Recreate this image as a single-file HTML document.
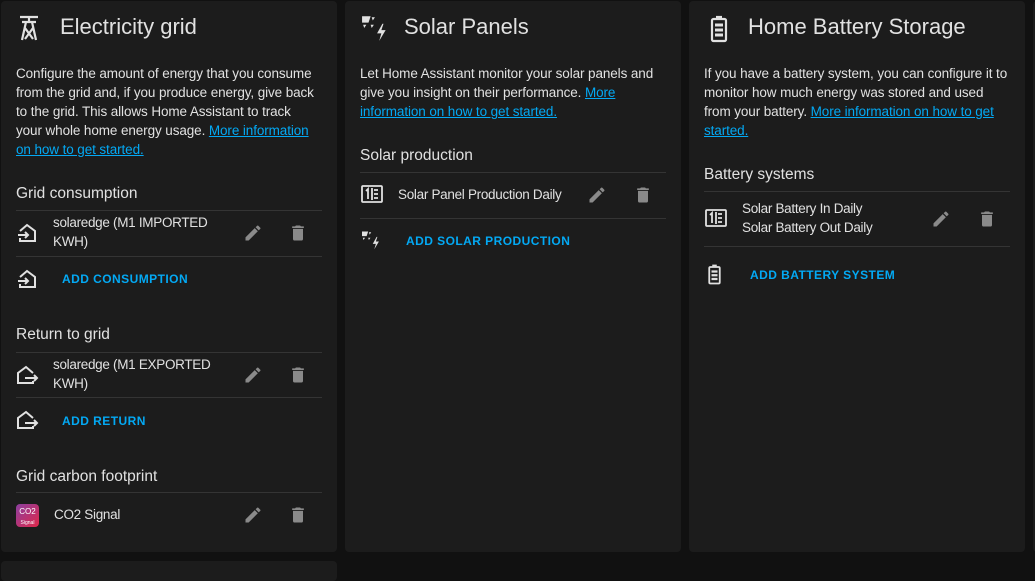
<!DOCTYPE html>
<html><head><meta charset="utf-8"><style>
*{margin:0;padding:0;box-sizing:border-box}
body{width:1035px;height:567px;background:#111111;overflow:hidden;font-family:"Liberation Sans",sans-serif;color:#e1e1e1;position:relative}
.card{position:absolute;background:#1c1c1c;border-radius:4px}
.a{position:absolute;white-space:nowrap}
.t{font-size:22px;color:#e1e1e1}
.p{font-size:13.5px;line-height:19px;color:#e1e1e1;letter-spacing:-0.1px}
.p a{color:#03a9f4;text-decoration:underline}
.h{font-size:15.5px;color:#e1e1e1}
.i{font-size:13.5px;line-height:19px;letter-spacing:-0.3px}
.b{font-size:12px;font-weight:bold;letter-spacing:0.45px;color:#03a9f4}
.d{position:absolute;height:1px;background:#343434}
svg{position:absolute}
</style></head><body>
<div class="card" style="left:1px;top:1px;width:336px;height:551px"></div>
<div class="card" style="left:345px;top:1px;width:336px;height:551px"></div>
<div class="card" style="left:689px;top:1px;width:336px;height:551px"></div>
<div class="card" style="left:1px;top:561px;width:336px;height:20px"></div>
<div class="card" style="left:1033px;top:1px;width:20px;height:551px"></div>

<!-- Card 1 -->
<svg style="left:17px;top:14px" width="24" height="28" viewBox="0 0 24 28" fill="none" stroke="#e1e1e1" stroke-width="2.2"><path d="M3 3H21M5 8H19M12 3V8M9 8L5 26M15 8L19 26M8 14L16 25M16 14L8 25"/></svg>
<div class="a t" style="left:60px;top:14px">Electricity grid</div>
<div class="a p" style="left:16px;top:64px">Configure the amount of energy that you consume<br>from the grid and, if you produce energy, give back<br>to the grid. This allows Home Assistant to track<br>your whole home energy usage. <a>More information<br>on how to get started.</a></div>
<div class="a h" style="left:16px;top:185px">Grid consumption</div>
<div class="d" style="left:16px;top:210px;width:306px"></div>
<svg style="left:16px;top:222px" width="22" height="22" viewBox="0 0 22 22" fill="none" stroke="#e1e1e1" stroke-width="2"><path d="M4 9L11 3L19 9V19H4V16M2 13H12M9 10L12 13L9 16"/></svg>
<div class="a i" style="left:53px;top:213px">solaredge (M1 IMPORTED<br>KWH)</div>
<svg style="left:243px;top:223px" width="20" height="20" viewBox="0 0 24 24" fill="#8a8a8a"><path d="M3 17.25V21h3.75L17.81 9.94l-3.75-3.75L3 17.25zM20.71 7.04a1 1 0 000-1.41l-2.34-2.34a1 1 0 00-1.41 0l-1.83 1.83 3.75 3.75 1.83-1.830z"/></svg>
<svg style="left:288px;top:223px" width="20" height="20" viewBox="0 0 24 24" fill="#8a8a8a"><path d="M6 19a2 2 0 002 2h8a2 2 0 002-2V7H6v12zM19 4h-3.5l-1-1h-5l-1 1H5v2h14V4z"/></svg>
<div class="d" style="left:16px;top:256px;width:306px"></div>
<svg style="left:16px;top:268px" width="22" height="22" viewBox="0 0 22 22" fill="none" stroke="#e1e1e1" stroke-width="2"><path d="M4 9L11 3L19 9V19H4V16M2 13H12M9 10L12 13L9 16"/></svg>
<div class="a b" style="left:62px;top:272px">ADD CONSUMPTION</div>

<div class="a h" style="left:16px;top:326px">Return to grid</div>
<div class="d" style="left:16px;top:352px;width:306px"></div>
<svg style="left:16px;top:364px" width="24" height="22" viewBox="0 0 24 22" fill="none" stroke="#e1e1e1" stroke-width="2"><path d="M17 9L10 3L2 9V19H17V17M9 14H21M18 11L21 14L18 17"/></svg>
<div class="a i" style="left:53px;top:355px">solaredge (M1 EXPORTED<br>KWH)</div>
<svg style="left:243px;top:365px" width="20" height="20" viewBox="0 0 24 24" fill="#8a8a8a"><path d="M3 17.25V21h3.75L17.81 9.94l-3.75-3.75L3 17.25zM20.71 7.04a1 1 0 000-1.41l-2.34-2.34a1 1 0 00-1.41 0l-1.83 1.83 3.75 3.75 1.83-1.83z"/></svg>
<svg style="left:288px;top:365px" width="20" height="20" viewBox="0 0 24 24" fill="#8a8a8a"><path d="M6 19a2 2 0 002 2h8a2 2 0 002-2V7H6v12zM19 4h-3.5l-1-1h-5l-1 1H5v2h14V4z"/></svg>
<div class="d" style="left:16px;top:397px;width:306px"></div>
<svg style="left:16px;top:409px" width="24" height="22" viewBox="0 0 24 22" fill="none" stroke="#e1e1e1" stroke-width="2"><path d="M17 9L10 3L2 9V19H17V17M9 14H21M18 11L21 14L18 17"/></svg>
<div class="a b" style="left:62px;top:414px">ADD RETURN</div>

<div class="a h" style="left:16px;top:468px">Grid carbon footprint</div>
<div class="d" style="left:16px;top:492px;width:306px"></div>
<div class="a" style="left:16px;top:504px;width:23px;height:23px;border-radius:4px;background:linear-gradient(135deg,#8b3fa0,#e0284a);color:#fff;font-size:8px;text-align:center;line-height:10px;padding-top:3px">CO2<br><span style="font-size:5px">Signal</span></div>
<div class="a i" style="left:54px;top:505px">CO2 Signal</div>
<svg style="left:243px;top:505px" width="20" height="20" viewBox="0 0 24 24" fill="#8a8a8a"><path d="M3 17.25V21h3.75L17.81 9.94l-3.75-3.75L3 17.25zM20.71 7.04a1 1 0 000-1.41l-2.34-2.34a1 1 0 00-1.41 0l-1.83 1.83 3.75 3.75 1.83-1.83z"/></svg>
<svg style="left:288px;top:505px" width="20" height="20" viewBox="0 0 24 24" fill="#8a8a8a"><path d="M6 19a2 2 0 002 2h8a2 2 0 002-2V7H6v12zM19 4h-3.5l-1-1h-5l-1 1H5v2h14V4z"/></svg>

<!-- Card 2 -->
<svg style="left:361px;top:14px" width="30" height="28" viewBox="0 0 28 26" fill="#e1e1e1"><path d="M1 2H9L7 8H1Z"/><path d="M10 3L13 3L11 6Z"/><path d="M2 10L5 10L3 13Z"/><path d="M9 10L12 10L10 13Z"/><path d="M20 9L15 18H19L17 25L23 15H19L21 9Z"/></svg>
<div class="a t" style="left:404px;top:14px">Solar Panels</div>
<div class="a p" style="left:360px;top:64px">Let Home Assistant monitor your solar panels and<br>give you insight on their performance. <a>More<br>information on how to get started.</a></div>
<div class="a h" style="left:360px;top:147px">Solar production</div>
<div class="d" style="left:360px;top:172px;width:306px"></div>
<svg style="left:361px;top:185px" width="22" height="18" viewBox="0 0 22 18" fill="none" stroke="#e1e1e1" stroke-width="1.8"><rect x="1" y="1" width="20" height="16" rx="1"/><path d="M5 6L7 4V14M11 3V15M13 5H17M13 9H17M13 13H17"/></svg>
<div class="a i" style="left:398px;top:185px">Solar Panel Production Daily</div>
<svg style="left:587px;top:185px" width="20" height="20" viewBox="0 0 24 24" fill="#8a8a8a"><path d="M3 17.25V21h3.75L17.81 9.94l-3.75-3.75L3 17.25zM20.71 7.04a1 1 0 000-1.41l-2.34-2.34a1 1 0 00-1.41 0l-1.83 1.83 3.75 3.75 1.83-1.83z"/></svg>
<svg style="left:633px;top:185px" width="20" height="20" viewBox="0 0 24 24" fill="#8a8a8a"><path d="M6 19a2 2 0 002 2h8a2 2 0 002-2V7H6v12zM19 4h-3.5l-1-1h-5l-1 1H5v2h14V4z"/></svg>
<div class="d" style="left:360px;top:218px;width:306px"></div>
<svg style="left:361px;top:230px" width="22" height="20" viewBox="0 0 28 26" fill="#e1e1e1"><path d="M1 2H9L7 8H1Z"/><path d="M10 3L13 3L11 6Z"/><path d="M2 10L5 10L3 13Z"/><path d="M9 10L12 10L10 13Z"/><path d="M20 9L15 18H19L17 25L23 15H19L21 9Z"/></svg>
<div class="a b" style="left:406px;top:234px">ADD SOLAR PRODUCTION</div>

<!-- Card 3 -->
<svg style="left:709px;top:15px" width="20" height="28" viewBox="0 0 20 28" fill="none" stroke="#e1e1e1" stroke-width="2.2"><path d="M7 2H13"/><rect x="3" y="4" width="14" height="22" rx="1.5"/><path d="M6 10H14M6 15H14M6 20H14" stroke-width="3"/></svg>
<div class="a t" style="left:748px;top:14px">Home Battery Storage</div>
<div class="a p" style="left:704px;top:64px">If you have a battery system, you can configure it to<br>monitor how much energy was stored and used<br>from your battery. <a>More information on how to get<br>started.</a></div>
<div class="a h" style="left:704px;top:166px">Battery systems</div>
<div class="d" style="left:704px;top:191px;width:306px"></div>
<svg style="left:705px;top:209px" width="22" height="18" viewBox="0 0 22 18" fill="none" stroke="#e1e1e1" stroke-width="1.8"><rect x="1" y="1" width="20" height="16" rx="1"/><path d="M5 6L7 4V14M11 3V15M13 5H17M13 9H17M13 13H17"/></svg>
<div class="a i" style="left:742px;top:199px">Solar Battery In Daily<br>Solar Battery Out Daily</div>
<svg style="left:931px;top:209px" width="20" height="20" viewBox="0 0 24 24" fill="#8a8a8a"><path d="M3 17.25V21h3.75L17.81 9.94l-3.75-3.75L3 17.25zM20.71 7.04a1 1 0 000-1.41l-2.34-2.34a1 1 0 00-1.41 0l-1.83 1.83 3.75 3.75 1.83-1.83z"/></svg>
<svg style="left:977px;top:209px" width="20" height="20" viewBox="0 0 24 24" fill="#8a8a8a"><path d="M6 19a2 2 0 002 2h8a2 2 0 002-2V7H6v12zM19 4h-3.5l-1-1h-5l-1 1H5v2h14V4z"/></svg>
<div class="d" style="left:704px;top:246px;width:306px"></div>
<svg style="left:707px;top:264px" width="15" height="21" viewBox="0 0 20 28" fill="none" stroke="#e1e1e1" stroke-width="2.4"><path d="M7 2H13"/><rect x="3" y="4" width="14" height="22" rx="1.5"/><path d="M6 10H14M6 15H14M6 20H14" stroke-width="3"/></svg>
<div class="a b" style="left:750px;top:268px">ADD BATTERY SYSTEM</div>
</body></html>
